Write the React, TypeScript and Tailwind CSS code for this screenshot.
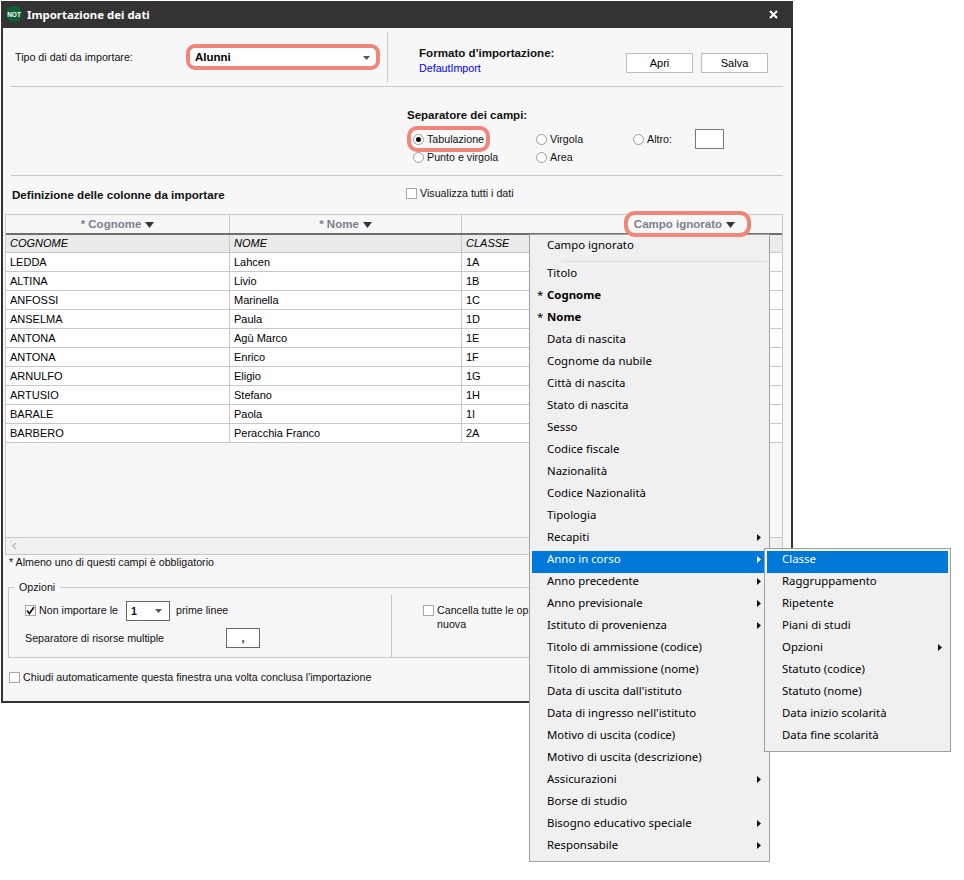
const rows = [
  ['LEDDA', 'Lahcen', '1A'],
  ['ALTINA', 'Livio', '1B'],
  ['ANFOSSI', 'Marinella', '1C'],
  ['ANSELMA', 'Paula', '1D'],
  ['ANTONA', 'Agù Marco', '1E'],
  ['ANTONA', 'Enrico', '1F'],
  ['ARNULFO', 'Eligio', '1G'],
  ['ARTUSIO', 'Stefano', '1H'],
  ['BARALE', 'Paola', '1I'],
  ['BARBERO', 'Peracchia Franco', '2A'],
];

type MenuEntry = { label: string; sub?: boolean; bold?: boolean; active?: boolean };

const mainMenu: MenuEntry[] = [
  { label: 'Titolo' },
  { label: 'Cognome', bold: true },
  { label: 'Nome', bold: true },
  { label: 'Data di nascita' },
  { label: 'Cognome da nubile' },
  { label: 'Città di nascita' },
  { label: 'Stato di nascita' },
  { label: 'Sesso' },
  { label: 'Codice fiscale' },
  { label: 'Nazionalità' },
  { label: 'Codice Nazionalità' },
  { label: 'Tipologia' },
  { label: 'Recapiti', sub: true },
  { label: 'Anno in corso', sub: true, active: true },
  { label: 'Anno precedente', sub: true },
  { label: 'Anno previsionale', sub: true },
  { label: 'Istituto di provenienza', sub: true },
  { label: 'Titolo di ammissione (codice)' },
  { label: 'Titolo di ammissione (nome)' },
  { label: "Data di uscita dall'istituto" },
  { label: "Data di ingresso nell'istituto" },
  { label: 'Motivo di uscita (codice)' },
  { label: 'Motivo di uscita (descrizione)' },
  { label: 'Assicurazioni', sub: true },
  { label: 'Borse di studio' },
  { label: 'Bisogno educativo speciale', sub: true },
  { label: 'Responsabile', sub: true },
];

const subMenu: MenuEntry[] = [
  { label: 'Classe', active: true },
  { label: 'Raggruppamento' },
  { label: 'Ripetente' },
  { label: 'Piani di studi' },
  { label: 'Opzioni', sub: true },
  { label: 'Statuto (codice)' },
  { label: 'Statuto (nome)' },
  { label: 'Data inizio scolarità' },
  { label: 'Data fine scolarità' },
];

function Caret() {
  return (
    <svg width="9" height="6" viewBox="0 0 9 6" className="ml-[4px] shrink-0">
      <path d="M0 0h9L4.5 6z" fill="#333" />
    </svg>
  );
}

function SmallCaret() {
  return (
    <svg width="7" height="4" viewBox="0 0 7 4" className="shrink-0">
      <path d="M0 0h7L3.5 4z" fill="#555" />
    </svg>
  );
}

function Radio({ label, checked }: { label: string; checked?: boolean }) {
  return (
    <div className="flex h-[18px] items-center gap-[3px]">
      <span className="flex h-[11px] w-[11px] items-center justify-center rounded-full border border-[#9a9a9a] bg-white">
        {checked && <span className="h-[5px] w-[5px] rounded-full bg-black" />}
      </span>
      <span>{label}</span>
    </div>
  );
}

function Checkbox({ checked }: { checked?: boolean }) {
  return (
    <span className="flex h-[11px] w-[11px] shrink-0 items-center justify-center border border-[#a8a8a8] bg-white">
      {checked && (
        <svg width="9" height="9" viewBox="0 0 9 9">
          <path d="M1 4.5l2.4 3L8 1" fill="none" stroke="#111" strokeWidth="1.7" />
        </svg>
      )}
    </span>
  );
}

function MenuItem({ item }: { item: MenuEntry }) {
  return (
    <div
      className={`relative flex h-[22px] items-start justify-between pl-[15px] pr-[6px] leading-[16px] ${
        item.active ? 'bg-[#0078d7] text-white' : 'text-black'
      }`}
    >
      <span className={item.bold ? 'font-bold' : ''}>{item.label}</span>
      {item.bold && <span className="absolute left-[5px] top-0">*</span>}
      {item.sub && (
        <svg width="4" height="7" viewBox="0 0 4 7" className="mt-[5px]">
          <path d="M0 0l4 3.5L0 7z" fill={item.active ? '#fff' : '#111'} />
        </svg>
      )}
    </div>
  );
}

export default function App() {
  return (
    <div className="relative min-h-[880px] bg-white font-['Liberation_Sans',Arial,sans-serif] text-[10.7px] text-[#111]">
      <div className="absolute left-[1px] top-[1px] h-[702px] w-[792px] border-x-2 border-b-2 border-[#333] bg-[#f7f7f7]">
        {/* title bar */}
        <div className="flex h-[27px] items-center justify-between bg-[#333] pl-[3px] pr-[13px]">
          <div className="flex items-center gap-[5px]">
            <span className="flex h-[16px] w-[16px] items-center justify-center rounded-full bg-[#0b5f35] text-[6.5px] font-bold text-white">
              NOT
            </span>
            <span className="font-['Noto_Sans',sans-serif] text-[11.4px] font-bold text-white">
              Importazione dei dati
            </span>
          </div>
          <svg width="9" height="9" viewBox="0 0 9 9">
            <path d="M1 1l7 7M8 1L1 8" stroke="#fff" strokeWidth="2.2" />
          </svg>
        </div>

        {/* tipo di dati + formato */}
        <div className="mx-[8px] flex h-[59px] border-b border-[#c8c8c8]">
          <div className="my-[4px] flex w-[377px] items-start border-r border-[#c8c8c8]">
            <span className="ml-[4px] mt-[17px] w-[171px]">Tipo di dati da importare:</span>
            <div className="mt-[12px] flex h-[26px] w-[194px] items-center justify-between rounded-[9px] border-4 border-[#f0857a] bg-white pl-[5px] pr-[6px] pt-[1px] text-[11.5px] font-bold text-black">
              Alunni
              <SmallCaret />
            </div>
          </div>
          <div className="ml-[31px] mt-[17px]">
            <div className="text-[11.6px] font-bold leading-[16px]">Formato d'importazione:</div>
            <div className="leading-[15px] text-[#0000ff]">DefautImport</div>
          </div>
          <div className="ml-auto mr-[15px] mt-[25px] flex gap-[8px] text-black">
            <button className="h-[20px] w-[67px] border border-[#bdbdbd] bg-white text-[11px]">Apri</button>
            <button className="h-[20px] w-[67px] border border-[#bdbdbd] bg-white text-[11px]">Salva</button>
          </div>
        </div>

        {/* separatore */}
        <div className="mx-[8px] h-[89px] border-b border-[#c8c8c8] pl-[396px] pt-[20px]">
          <div className="text-[11.5px] font-bold leading-[16px]">Separatore dei campi:</div>
          <div className="ml-[6px] mt-[7px] grid grid-cols-[123px_97px_auto]">
            <div className="relative">
              <Radio label="Tabulazione" checked />
              <span className="absolute -left-[6px] -top-[4px] h-[26px] w-[83px] rounded-[10px] border-4 border-[#f0857a]" />
            </div>
            <Radio label="Virgola" />
            <div className="flex items-start">
              <Radio label="Altro:" />
              <span className="-my-[1px] ml-[23px] h-[20px] w-[29px] border border-[#77777f] bg-white" />
            </div>
            <Radio label="Punto e virgola" />
            <Radio label="Area" />
          </div>
        </div>

        {/* definizione */}
        <div className="flex h-[38px] pl-[9px]">
          <span className="mt-[11px] w-[394px] text-[11.6px] font-bold leading-[16px]">
            Definizione delle colonne da importare
          </span>
          <div className="mt-[11px] flex h-[12px] items-center gap-[3px]">
            <Checkbox />
            <span>Visualizza tutti i dati</span>
          </div>
        </div>

        {/* tabella */}
        <div className="relative ml-[2px] flex h-[341px] w-[778px] flex-col border border-[#c8c8c8] bg-[#f7f7f7] text-[11px]">
          <div className="box-content grid h-[18px] grid-cols-[224px_232px_1fr] border-b-2 border-[#6e6e6e] text-[11.5px] font-bold text-[#7b8090]">
            <div className="flex items-center justify-center border-r border-[#c8c8c8] pt-[1px]">
              * Cognome
              <Caret />
            </div>
            <div className="flex items-center justify-center border-r border-[#c8c8c8] pt-[1px]">
              * Nome
              <Caret />
            </div>
            <div className="relative flex items-center justify-end pr-[47px] pt-[1px]">
              Campo ignorato
              <Caret />
              <span className="absolute -top-[4px] right-[31px] z-10 h-[26px] w-[127px] rounded-[11px] border-4 border-[#f0857a]" />
            </div>
          </div>
          <div className="grid h-[18px] grid-cols-[224px_232px_1fr] border-b border-[#c8c8c8] bg-[#ebebeb] italic leading-[16px] text-black">
            <div className="border-r border-[#c8c8c8] pl-[4px]">COGNOME</div>
            <div className="border-r border-[#c8c8c8] pl-[4px]">NOME</div>
            <div className="pl-[4px]">CLASSE</div>
          </div>
          {rows.map((r, i) => (
            <div key={i} className="grid h-[19px] grid-cols-[224px_232px_1fr] border-b border-[#c8c8c8] bg-white leading-[18px] text-black">
              <div className="border-r border-[#c8c8c8] pl-[4px]">{r[0]}</div>
              <div className="border-r border-[#c8c8c8] pl-[4px]">{r[1]}</div>
              <div className="pl-[4px]">{r[2]}</div>
            </div>
          ))}
          <div className="flex-1" />
          <div className="flex h-[17px] items-center border-t border-[#c8c8c8] bg-[#f0f0f0] pl-[5px]">
            <svg width="6" height="8" viewBox="0 0 6 8">
              <path d="M5 1L2 4l3 3" fill="none" stroke="#c0c0c0" strokeWidth="1.6" />
            </svg>
          </div>
        </div>

        {/* footer */}
        <div className="pl-[6px] leading-[14px]">* Almeno uno di questi campi è obbligatorio</div>
        <div className="relative ml-[5px] mt-[18px] flex h-[71px] w-[774px] border border-[#c8c8c8]">
          <span className="absolute -top-[8px] left-[5px] bg-[#f7f7f7] px-[5px] leading-[14px]">Opzioni</span>
          <div className="mt-[7px] w-[383px] border-r border-[#c8c8c8] pl-[16px] pt-[6px]">
            <div className="flex items-start">
              <div className="mt-[3px] flex h-[12px] items-center gap-[3px]">
                <Checkbox checked />
                <span>Non importare le</span>
              </div>
              <div className="ml-[8px] flex h-[20px] w-[44px] items-center justify-between border border-[#666] bg-white pl-[4px] pr-[7px] font-bold">
                1
                <SmallCaret />
              </div>
              <span className="ml-[6px] mt-[3px] leading-[13px]">prime linee</span>
            </div>
            <div className="mt-[7px] flex items-start">
              <span className="mt-[3px] w-[201px] leading-[14px]">Separatore di risorse multiple</span>
              <div className="flex h-[20px] w-[34px] items-center justify-center border border-[#666] bg-white font-bold">,</div>
            </div>
          </div>
          <div className="ml-[31px] mt-[15px] flex gap-[3px] leading-[14px]">
            <span className="mt-[2px]"><Checkbox /></span>
            <span className="w-[200px]">Cancella tutte le opzioni prima di ogni nuova</span>
          </div>
        </div>
        <div className="ml-[6px] mt-[13px] flex h-[12px] items-center gap-[3px]">
          <Checkbox />
          <span>Chiudi automaticamente questa finestra una volta conclusa l'importazione</span>
        </div>
      </div>

      {/* menu campo */}
      <div className="absolute left-[529px] top-[234px] h-[628px] w-[241px] border border-[#a0a0a0] bg-[#f0f0f0] p-[2px] font-['Noto_Sans',sans-serif] text-[11.4px]">
        <div className="h-[22px] pl-[15px] leading-[16px] text-black">Campo ignorato</div>
        <div className="mb-[3px] ml-[30px] mt-[2px] h-px bg-[#dcdcdc]" />
        {mainMenu.map((item) => (
          <MenuItem key={item.label} item={item} />
        ))}
      </div>

      {/* sottomenu */}
      <div className="absolute left-[764px] top-[548px] h-[204px] w-[187px] border border-[#a0a0a0] bg-[#f0f0f0] p-[2px] font-['Noto_Sans',sans-serif] text-[11.4px]">
        {subMenu.map((item) => (
          <MenuItem key={item.label} item={item} />
        ))}
      </div>
    </div>
  );
}
